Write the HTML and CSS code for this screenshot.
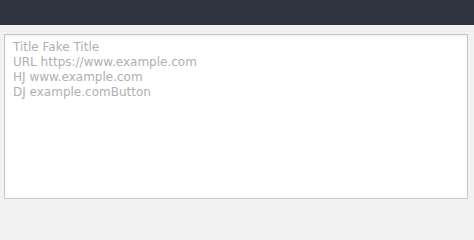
FILE: index.html
```html
<!DOCTYPE html>
<html>
<head>
<meta charset="utf-8">
<link rel="stylesheet" href="styles.css">
</head>
<body>
<div class="topbar"></div>
<main class="content">
  <textarea class="field" placeholder="Title Fake Title
URL https://www.example.com
HJ www.example.com
DJ example.comButton"></textarea>
</main>
</body>
</html>
```
FILE: styles.css
```css
html, body {
  margin: 0;
  padding: 0;
}
body {
  background: #f1f1f1;
  font-family: "DejaVu Sans", sans-serif;
  min-height: 208px;
}
.topbar {
  height: 25px;
  background: #2e3340;
}
.content {
  padding: 9px 6px 9px 4px;
}
.field {
  display: block;
  box-sizing: border-box;
  width: 100%;
  height: 165px;
  margin: 0;
  border: 1px solid #c8c8c8;
  box-shadow: inset 0 1px 2px rgba(0,0,0,0.08);
  background: #fff;
  padding: 5px 8px;
  font-family: "DejaVu Sans", sans-serif;
  font-size: 12px;
  line-height: 15px;
  resize: none;
  outline: none;
}
.field::placeholder {
  color: #b0b0b0;
  opacity: 1;
}
```
